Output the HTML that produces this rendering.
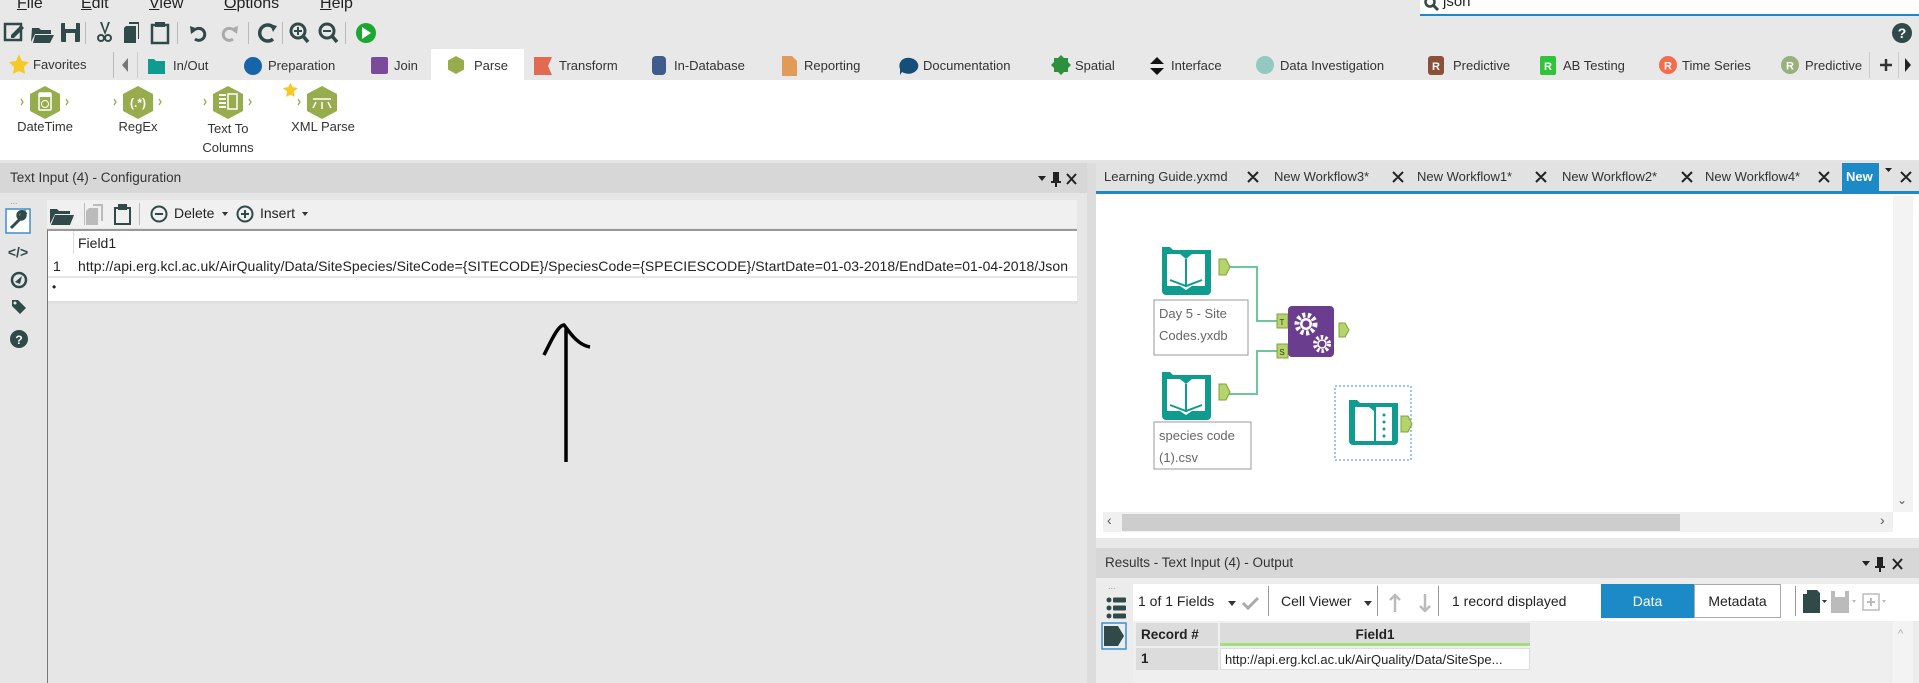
<!DOCTYPE html>
<html><head><meta charset="utf-8"><style>
*{margin:0;padding:0;box-sizing:border-box}
body{width:1919px;height:683px;overflow:hidden;background:#e8e8e8;font-family:"Liberation Sans",sans-serif;font-size:13px;color:#222;position:relative}
.a{position:absolute;white-space:nowrap}
.t{font-size:13px;color:#333}
.ic{position:absolute}
</style></head><body>
<!-- menu -->
<div class="a" style="top:-5px;left:17px;font-size:16px"><u>F</u>ile</div>
<div class="a" style="top:-5px;left:81px;font-size:16px"><u>E</u>dit</div>
<div class="a" style="top:-5px;left:149px;font-size:16px"><u>V</u>iew</div>
<div class="a" style="top:-5px;left:224px;font-size:16px"><u>O</u>ptions</div>
<div class="a" style="top:-5px;left:320px;font-size:16px"><u>H</u>elp</div>
<!-- search -->
<div class="a" style="left:1420px;top:0;width:499px;height:16px;background:#fff;border-bottom:2px solid #1b8ac6"></div>
<svg class="ic" style="left:1424px;top:-4px" width="16" height="16"><circle cx="6" cy="6" r="4.5" stroke="#2f4a48" stroke-width="2.5" fill="none"/><line x1="9" y1="9" x2="14" y2="14" stroke="#2f4a48" stroke-width="3"/></svg>
<div class="a" style="left:1443px;top:-7px;font-size:15px">json</div>
<!-- toolbar icons -->
<svg class="ic" style="left:0;top:18px" width="380" height="28" fill="#2f4a48">
<rect x="5" y="6" width="16" height="16" fill="none" stroke="#2f4a48" stroke-width="2.5"/><path d="M11 17l10-10 3 3-10 10h-3z"/>
<path d="M32 10h7l2 2h10v4h-16l-4 8z M35 17h19l-4 8h-17z"/>
<rect x="61" y="5" width="19" height="19" rx="1"/><rect x="65" y="5" width="11" height="6" fill="#e8e8e8"/><rect x="66" y="15" width="9" height="9" fill="#e8e8e8"/>
<rect x="85" y="4" width="1" height="22" fill="#bbb"/>
<circle cx="101" cy="20" r="3" fill="none" stroke="#2f4a48" stroke-width="2"/><circle cx="108" cy="20" r="3" fill="none" stroke="#2f4a48" stroke-width="2"/><path d="M100 4l5 13 5-13h-2l-3 9-3-9z"/>
<path d="M126 8h10v17h-12v-15z"/><path d="M129 4h10v17h-1v-15h-9z"/>
<rect x="152" y="7" width="16" height="18" fill="none" stroke="#2f4a48" stroke-width="2.5"/><rect x="155" y="4" width="10" height="5"/>
<rect x="177" y="4" width="1" height="22" fill="#bbb"/>
<path d="M196 11a6 6 0 1 1 -1 10" fill="none" stroke="#2f4a48" stroke-width="3"/><path d="M190 8l8 3-7 5z"/>
<path d="M232 11a6 6 0 1 0 1 10" fill="none" stroke="#aaa" stroke-width="3"/><path d="M238 8l-8 3 7 5z" fill="#aaa"/>
<rect x="248" y="4" width="1" height="22" fill="#bbb"/>
<path d="M273 9a8 8 0 1 0 0 12" fill="none" stroke="#2f4a48" stroke-width="3.5"/><path d="M270 6l7 2-4 6z"/>
<rect x="282" y="4" width="1" height="22" fill="#bbb"/>
<circle cx="298" cy="13" r="7" fill="none" stroke="#2f4a48" stroke-width="3"/><line x1="303" y1="18" x2="308" y2="24" stroke="#2f4a48" stroke-width="3.5"/><path d="M294 12h8v2h-8zM297 9h2v8h-2z"/>
<circle cx="327" cy="13" r="7" fill="none" stroke="#2f4a48" stroke-width="3"/><line x1="332" y1="18" x2="337" y2="24" stroke="#2f4a48" stroke-width="3.5"/><path d="M323 12h8v2h-8z"/>
<rect x="345" y="4" width="1" height="22" fill="#bbb"/>
<circle cx="366" cy="15" r="10" fill="#1aa832"/><path d="M362 9l9 6-9 6z" fill="#fff"/>
</svg>
<svg class="ic" style="left:1891px;top:22px" width="22" height="22"><circle cx="11" cy="11" r="10" fill="#2f4a48"/><text x="11" y="16" text-anchor="middle" fill="#fff" font-size="14" font-weight="bold" font-family="Liberation Sans">?</text></svg>
<!-- category tabs -->
<div class="a" style="left:0;top:49px;width:1919px;height:31px;background:#e8e8e8"></div>
<div class="a" style="left:431px;top:49px;width:93px;height:31px;background:#fff"></div>
<svg class="ic" style="left:0;top:49px" width="1919" height="31">
<path d="M19 5l3 7 7 1-5 5 1 7-6-3-6 3 1-7-5-5 7-1z" fill="#f7c928"/>
<rect x="113" y="3" width="1" height="26" fill="#bbb"/><path d="M128 9v14l-6-7z" fill="#777"/><rect x="137" y="3" width="1" height="26" fill="#ccc"/>
<path d="M148 10h6l2 2h9v13h-17z" fill="#0f9b8e"/>
<circle cx="253" cy="17" r="9" fill="#1565a8"/>
<rect x="371" y="8" width="17" height="17" rx="2" fill="#7a4b9a"/>
<path d="M456 7l8 4.5v9l-8 4.5-8-4.5v-9z" fill="#97ad4d"/>
<path d="M534 8h18l-4 9 4 9h-18z" fill="#e26a50"/>
<rect x="652" y="7" width="14" height="19" rx="4" fill="#3e5c8c"/>
<path d="M782 7h10l5 5v15h-15z" fill="#e19a57"/>
<path d="M906 9a10 8 0 1 1 -4 14l-2 3v-6a8 8 0 0 1 6-11z" fill="#164e7a"/>
<path d="M1061 6l3 3h4v4l3 3-3 3v4h-4l-3 3-3-3h-4v-4l-3-3 3-3v-4h4z" fill="#2e8f3e"/>
<path d="M1157 8l7 7h-14zM1157 26l7-7h-14z" fill="#111"/>
<circle cx="1265" cy="16" r="9" fill="#94c9c2"/>
<rect x="1428" y="7" width="16" height="19" rx="3" fill="#8a5038"/><text x="1436" y="21" text-anchor="middle" fill="#fff" font-size="11" font-weight="bold" font-family="Liberation Sans">R</text>
<rect x="1540" y="7" width="16" height="19" rx="2" fill="#2ec53a"/><text x="1548" y="21" text-anchor="middle" fill="#fff" font-size="11" font-weight="bold" font-family="Liberation Sans">R</text>
<circle cx="1668" cy="16" r="9" fill="#f36c4c"/><text x="1668" y="20.5" text-anchor="middle" fill="#fff" font-size="11" font-weight="bold" font-family="Liberation Sans">R</text>
<circle cx="1790" cy="16" r="9" fill="#98b07c"/><text x="1790" y="20.5" text-anchor="middle" fill="#fff" font-size="11" font-weight="bold" font-family="Liberation Sans">R</text>
<rect x="1869" y="3" width="1" height="26" fill="#ccc"/><path d="M1880 16h12M1886 10v12" stroke="#333" stroke-width="2.5"/>
<rect x="1898" y="3" width="1" height="26" fill="#ccc"/><path d="M1905 9v14l6-7z" fill="#222"/>
</svg>
<div class="a t" style="left:33px;top:57px">Favorites</div>
<div class="a t" style="left:173px;top:58px">In/Out</div>
<div class="a t" style="left:268px;top:58px">Preparation</div>
<div class="a t" style="left:394px;top:58px">Join</div>
<div class="a t" style="left:474px;top:58px">Parse</div>
<div class="a t" style="left:559px;top:58px">Transform</div>
<div class="a t" style="left:674px;top:58px">In-Database</div>
<div class="a t" style="left:804px;top:58px">Reporting</div>
<div class="a t" style="left:923px;top:58px">Documentation</div>
<div class="a t" style="left:1075px;top:58px">Spatial</div>
<div class="a t" style="left:1171px;top:58px">Interface</div>
<div class="a t" style="left:1280px;top:58px">Data Investigation</div>
<div class="a t" style="left:1453px;top:58px">Predictive</div>
<div class="a t" style="left:1563px;top:58px">AB Testing</div>
<div class="a t" style="left:1682px;top:58px">Time Series</div>
<div class="a t" style="left:1805px;top:58px;width:62px;overflow:hidden">Predictive</div>
<!-- palette -->
<div class="a" style="left:0;top:80px;width:1919px;height:80px;background:#fff"></div>
<svg class="ic" style="left:0;top:82px" width="340" height="44">
<g fill="#97ad4d"><path d="M45 4l15 8v17l-15 8-15-8v-17z"/><path d="M138 4l15 8v17l-15 8-15-8v-17z"/><path d="M228 4l15 8v17l-15 8-15-8v-17z"/><path d="M322 4l15 8v17l-15 8-15-8v-17z"/></g>
<g fill="none" stroke="#97ad4d" stroke-width="1.3"><path d="M21 17l2 3-2 3M66 17l2 3-2 3M114 17l2 3-2 3M159 17l2 3-2 3M204 17l2 3-2 3M249 17l2 3-2 3M298 17l2 3-2 3M343 17l2 3-2 3"/></g>
<rect x="39" y="11" width="12" height="17" rx="1" fill="none" stroke="#fff" stroke-width="1.5"/><rect x="39" y="11" width="12" height="4" fill="#fff"/><circle cx="45" cy="22" r="3.5" fill="none" stroke="#fff"/>
<text x="138" y="25" text-anchor="middle" fill="#fff" font-size="12" font-weight="bold" font-family="Liberation Sans">(.*)</text>
<path d="M219 13h7M219 17h7M219 21h7M219 25h7" stroke="#fff" stroke-width="2"/><rect x="228" y="12" width="9" height="15" fill="none" stroke="#fff" stroke-width="1.5"/>
<path d="M313 17h18M316 20l-3 6M322 20v7M328 20l3 6" stroke="#fff" stroke-width="1.5"/><path d="M264 6l2 4 5 1-4 3 1 5-4-2-4 2 1-5-4-3 5-1z" fill="#f7c928" transform="translate(0,-6) scale(1.1)"/>
</svg>
<div class="a t" style="left:45px;top:119px;transform:translateX(-50%)">DateTime</div>
<div class="a t" style="left:138px;top:119px;transform:translateX(-50%)">RegEx</div>
<div class="a t" style="left:228px;top:119px;transform:translateX(-50%);text-align:center;line-height:19px">Text To<br>Columns</div>
<div class="a t" style="left:323px;top:119px;transform:translateX(-50%)">XML Parse</div>
<!-- config panel -->
<div class="a" style="left:0;top:160px;width:1919px;height:3px;background:#e4e4e4"></div>
<div class="a" style="left:0;top:163px;width:1087px;height:30px;background:#d7d7d7"></div>
<div class="a t" style="left:10px;top:170px;font-size:13.5px;color:#333">Text Input (4) - Configuration</div>
<svg class="ic" style="left:1036px;top:170px" width="46" height="18"><path d="M2 6h8l-4 5z" fill="#222"/><path d="M17 2h6v9h2v2h-4v4h-2v-4h-4v-2h2z" fill="#222"/><path d="M31 4l9 10M40 4l-9 10" stroke="#222" stroke-width="2"/></svg>
<div class="a" style="left:0;top:193px;width:1087px;height:490px;background:#e6e6e6"></div>
<svg class="ic" style="left:0;top:196px" width="44" height="160">
<text x="10" y="8" fill="#999" font-size="9" font-family="Liberation Sans">...</text>
<rect x="6" y="13" width="24" height="24" fill="#fff" stroke="#3b8fd3" stroke-width="1.5"/><path d="M11 32l9-9M20 23a4 4 0 1 1 5-6l-3 1-1 2 1 2 2-1 1-3a4 4 0 0 1-5 5" stroke="#2f4a48" stroke-width="3" fill="none"/>
<text x="18" y="61" text-anchor="middle" fill="#2f4a48" font-size="14" font-weight="bold" font-family="Liberation Sans">&lt;/&gt;</text>
<circle cx="19" cy="84" r="7" fill="none" stroke="#2f4a48" stroke-width="2.5"/><path d="M15 86l7-6-2 8z" fill="#2f4a48"/>
<path d="M12 104l6 0 8 8-6 6-8-8z" fill="#2f4a48"/><circle cx="15" cy="107" r="1.5" fill="#e6e6e6"/>
<circle cx="19" cy="143" r="9" fill="#2f4a48"/><text x="19" y="148" text-anchor="middle" fill="#fff" font-size="12" font-weight="bold" font-family="Liberation Sans">?</text>
</svg>
<div class="a" style="left:47px;top:200px;width:1030px;height:28px;background:#f0f0f0"></div>
<svg class="ic" style="left:47px;top:200px" width="300" height="28">
<path d="M3 9h7l2 2h11v3h-15l-5 10zM8 15h19l-4 10h-19z" fill="#2f4a48"/>
<rect x="37" y="3" width="1" height="22" fill="#bbb"/>
<path d="M42 8h9v17h-12v-14z M46 4h10v17h-2v-15h-8z" fill="#bbb"/>
<rect x="68" y="8" width="15" height="16" fill="none" stroke="#2f4a48" stroke-width="2"/><rect x="71" y="4" width="9" height="6" fill="#2f4a48"/>
<rect x="92" y="3" width="1" height="22" fill="#bbb"/>
<circle cx="112" cy="14" r="7.5" fill="none" stroke="#2f4a48" stroke-width="2"/><rect x="108" y="13" width="8" height="2" fill="#2f4a48"/>
<path d="M175 12h6l-3 4z" fill="#333"/>
<circle cx="198" cy="14" r="7.5" fill="none" stroke="#2f4a48" stroke-width="2"/><rect x="194" y="13" width="8" height="2" fill="#2f4a48"/><rect x="197" y="10" width="2" height="8" fill="#2f4a48"/>
<path d="M255 12h6l-3 4z" fill="#333"/>
</svg>
<div class="a" style="left:174px;top:205px;font-size:14px">Delete</div>
<div class="a" style="left:260px;top:205px;font-size:14px">Insert</div>
<div class="a" style="left:47px;top:229px;width:1030px;height:454px;border-left:1px solid #777;border-top:2px solid #999;background:#e6e6e6"></div>
<div class="a" style="left:48px;top:231px;width:1029px;height:72px;background:#fff"></div>
<div class="a" style="left:48px;top:276px;width:1029px;height:2px;background:#e6e6e6"></div>
<div class="a" style="left:73px;top:231px;width:1px;height:23px;background:#ddd"></div>
<div class="a" style="left:48px;top:301px;width:1029px;height:3px;background:#e0e0e0"></div>
<div class="a" style="left:78px;top:235px;font-size:14px">Field1</div>
<div class="a" style="left:53px;top:258px;font-size:14px">1</div>
<div class="a" style="left:78px;top:258px;font-size:14px;letter-spacing:0.05px">http://api.erg.kcl.ac.uk/AirQuality/Data/SiteSpecies/SiteCode={SITECODE}/SpeciesCode={SPECIESCODE}/StartDate=01-03-2018/EndDate=01-04-2018/Json</div>
<div class="a" style="left:52px;top:280px;font-size:12px">•</div>
<svg class="ic" style="left:530px;top:315px" width="80" height="150"><path d="M36 147V14M14 40c6-12 14-30 20-30 6 8 14 20 26 22" fill="none" stroke="#000" stroke-width="3.5"/></svg>
<!-- divider -->
<div class="a" style="left:1087px;top:163px;width:9px;height:520px;background:#dcdcdc"></div>
<!-- workflow tabs -->
<div class="a" style="left:1096px;top:163px;width:823px;height:29px;background:#e2e2e2"></div>
<div class="a" style="left:1096px;top:191px;width:823px;height:3px;background:#1b8ac6"></div>
<div class="a t" style="left:1104px;top:169px">Learning Guide.yxmd</div>
<div class="a t" style="left:1274px;top:169px">New Workflow3*</div>
<div class="a t" style="left:1417px;top:169px">New Workflow1*</div>
<div class="a t" style="left:1562px;top:169px">New Workflow2*</div>
<div class="a t" style="left:1705px;top:169px">New Workflow4*</div>
<div class="a" style="left:1842px;top:163px;width:37px;height:29px;background:#1b8ac6;color:#fff;font-weight:bold;padding:6px 0 0 4px;overflow:hidden">New</div>
<svg class="ic" style="left:1096px;top:163px" width="823" height="29"><g stroke="#222" stroke-width="2"><path d="M152 9l10 10M162 9l-10 10M297 9l10 10M307 9l-10 10M440 9l10 10M450 9l-10 10M586 9l10 10M596 9l-10 10M723 9l10 10M733 9l-10 10M805 9l10 10M815 9l-10 10"/></g><path d="M789 5h7l-3.5 4z" fill="#222"/></svg>
<!-- canvas -->
<div class="a" style="left:1096px;top:194px;width:823px;height:357px;background:#fff"></div>
<div class="a" style="left:1893px;top:196px;width:20px;height:316px;background:#f3f3f3"></div>
<div class="a" style="left:1897px;top:493px;font-size:12px;color:#555">⌄</div>
<div class="a" style="left:1103px;top:512px;width:790px;height:20px;background:#f0f0f0"></div>
<div class="a" style="left:1122px;top:514px;width:558px;height:17px;background:#cdcdcd"></div>
<div class="a" style="left:1107px;top:512px;font-size:14px;color:#555">‹</div>
<div class="a" style="left:1880px;top:512px;font-size:14px;color:#555">›</div>
<svg class="ic" style="left:1096px;top:194px" width="800" height="318">
<g fill="none" stroke="#6cc79a" stroke-width="2"><path d="M133 73h28v54h20M133 200h28v-43h20"/></g>
<g id="bk"><path d="M66 53h8l3 3h38v41a4 4 0 0 1-4 4h-41a4 4 0 0 1-4-4z" fill="#0f9b8e"/><path d="M71 60h13l6 5 6-5h13v32l-13 0-6 4-6-4h-13z" fill="#fff"/><path d="M90 65v28" stroke="#0f9b8e" stroke-width="2"/><path d="M74 86l16 6 16-6" stroke="#0f9b8e" stroke-width="2" fill="none"/></g>
<use href="#bk" y="125"/>
<path d="M123 65h7l4 8-4 8h-7z" fill="#b5d46b" stroke="#7fa33a"/>
<path d="M123 190h7l4 8-4 8h-7z" fill="#b5d46b" stroke="#7fa33a"/>
<rect x="58" y="106" width="94" height="55" fill="#fff" stroke="#999"/>
<rect x="58" y="228" width="97" height="47" fill="#fff" stroke="#999"/>
<rect x="181" y="120" width="11" height="14" fill="#b5d46b" stroke="#7fa33a"/><text x="186" y="131" text-anchor="middle" font-size="8" font-family="Liberation Sans" fill="#333">T</text>
<rect x="181" y="150" width="11" height="14" fill="#b5d46b" stroke="#7fa33a"/><text x="186" y="161" text-anchor="middle" font-size="8" font-family="Liberation Sans" fill="#333">S</text>
<rect x="192" y="112" width="46" height="51" rx="4" fill="#6a3d8e"/>
<circle cx="210" cy="130" r="9" fill="none" stroke="#fff" stroke-width="5" stroke-dasharray="3 2.5"/><circle cx="210" cy="130" r="6" fill="#fff"/><circle cx="210" cy="130" r="3.5" fill="#6a3d8e"/>
<circle cx="226" cy="150" r="7" fill="none" stroke="#fff" stroke-width="4" stroke-dasharray="2.5 2"/><circle cx="226" cy="150" r="4" fill="#6a3d8e" stroke="#fff" stroke-width="1.5"/>
<path d="M243 129h6l4 7-4 7h-6z" fill="#b5d46b" stroke="#7fa33a"/>
<rect x="239" y="192" width="76" height="74" fill="none" stroke="#3b8fd3" stroke-dasharray="2 2"/>
<path d="M253 206h8l3 3h38v38a4 4 0 0 1-4 4h-41a4 4 0 0 1-4-4z" fill="#0f9b8e"/><path d="M259 213h14l5 4v30h-19z" fill="#fff"/><rect x="280" y="213" width="16" height="34" fill="#fff"/><g fill="#0f9b8e"><circle cx="288" cy="221" r="1.5"/><circle cx="288" cy="228" r="1.5"/><circle cx="288" cy="235" r="1.5"/><circle cx="288" cy="242" r="1.5"/></g>
<path d="M305 222h7l4 8-4 8h-7z" fill="#b5d46b" stroke="#7fa33a"/>
</svg>
<div class="a" style="left:1159px;top:303px;font-size:13px;color:#666;line-height:22px">Day 5 - Site<br>Codes.yxdb</div>
<div class="a" style="left:1159px;top:425px;font-size:13px;color:#666;line-height:22px">species code<br>(1).csv</div>
<!-- results -->
<div class="a" style="left:1096px;top:538px;width:823px;height:10px;background:#e8e8e8"></div>
<div class="a" style="left:1096px;top:548px;width:823px;height:30px;background:#d7d7d7"></div>
<div class="a t" style="left:1105px;top:555px;font-size:13.5px">Results - Text Input (4) - Output</div>
<svg class="ic" style="left:1860px;top:555px" width="50" height="18"><path d="M2 6h8l-4 5z" fill="#222"/><path d="M17 2h6v9h2v2h-4v4h-2v-4h-4v-2h2z" fill="#222"/><path d="M33 4l9 10M42 4l-9 10" stroke="#222" stroke-width="2"/></svg>
<div class="a" style="left:1096px;top:578px;width:823px;height:105px;background:#ececec"></div>
<div class="a" style="left:1133px;top:584px;width:786px;height:37px;background:#fff"></div>
<svg class="ic" style="left:1100px;top:582px" width="819" height="100">
<text x="8" y="7" fill="#999" font-size="9" font-family="Liberation Sans">...</text>
<g fill="#2f4a48"><circle cx="9" cy="18" r="2.5"/><rect x="13" y="15.5" width="13" height="5" rx="1"/><circle cx="9" cy="26" r="2.5"/><rect x="13" y="23.5" width="13" height="5" rx="1"/><circle cx="9" cy="34" r="2.5"/><rect x="13" y="31.5" width="13" height="5" rx="1"/></g>
<rect x="2" y="41" width="24" height="26" fill="none" stroke="#3b8fd3" stroke-width="1.5"/><path d="M4 44h14l6 10-6 10h-14z" fill="#2f4a48"/>
<path d="M128 19h8l-4 5z" fill="#333"/><path d="M143 21l5 5 10-10" stroke="#aaa" stroke-width="3" fill="none"/>
<rect x="168" y="4" width="1" height="30" fill="#999"/>
<path d="M264 19h8l-4 5z" fill="#333"/>
<rect x="277" y="4" width="1" height="30" fill="#999"/>
<path d="M295 30v-16M290 18l5-5 5 5" stroke="#bbb" stroke-width="2.5" fill="none"/>
<path d="M325 12v16M320 24l5 5 5-5" stroke="#bbb" stroke-width="2.5" fill="none"/>
<rect x="338" y="4" width="1" height="30" fill="#999"/>
<rect x="695" y="4" width="1" height="30" fill="#999"/>
<path d="M703 12h4v-4h10l3 3v20h-17z" fill="#2f4a48"/><path d="M722 18h5l-2.5 3z" fill="#333"/>
<rect x="731" y="9" width="18" height="22" fill="#bbb"/><rect x="735" y="9" width="10" height="6" fill="#fff"/><path d="M752 18h4l-2 3z" fill="#bbb"/>
<rect x="763" y="12" width="16" height="16" fill="none" stroke="#bbb" stroke-width="1.5"/><path d="M767 20h8M771 16v8" stroke="#bbb" stroke-width="2"/><path d="M782 18h4l-2 3z" fill="#bbb"/>
</svg>
<div class="a" style="left:1138px;top:593px;font-size:14px">1 of 1 Fields</div>
<div class="a" style="left:1281px;top:593px;font-size:14px">Cell Viewer</div>
<div class="a" style="left:1452px;top:593px;font-size:14px">1 record displayed</div>
<div class="a" style="left:1601px;top:584px;width:93px;height:34px;background:#1b8ac6;color:#fff;font-size:14px;text-align:center;line-height:34px">Data</div>
<div class="a" style="left:1694px;top:584px;width:87px;height:34px;background:#fff;border:1px solid #aaa;font-size:14px;text-align:center;line-height:32px">Metadata</div>
<div class="a" style="left:1133px;top:621px;width:760px;height:62px;background:#efefef"></div>
<div class="a" style="left:1136px;top:623px;width:82px;height:23px;background:#dcdcdc;font-weight:bold;font-size:13.5px;padding:4px 0 0 5px">Record #</div>
<div class="a" style="left:1220px;top:623px;width:310px;height:23px;background:#dcdcdc;border-bottom:3px solid #9ee07a;font-weight:bold;font-size:13.5px;text-align:center;padding-top:4px">Field1</div>
<div class="a" style="left:1136px;top:648px;width:82px;height:22px;background:#dcdcdc;font-weight:bold;font-size:13.5px;padding:3px 0 0 5px">1</div>
<div class="a" style="left:1220px;top:648px;width:310px;height:22px;background:#fff;border:1px solid #ddd;font-size:13px;padding:3px 0 0 4px;overflow:hidden">http://api.erg.kcl.ac.uk/AirQuality/Data/SiteSpe...</div>
<div class="a" style="left:1893px;top:621px;width:20px;height:62px;background:#f3f3f3"></div>
<div class="a" style="left:1898px;top:628px;font-size:11px;color:#aaa">^</div>
</body></html>
